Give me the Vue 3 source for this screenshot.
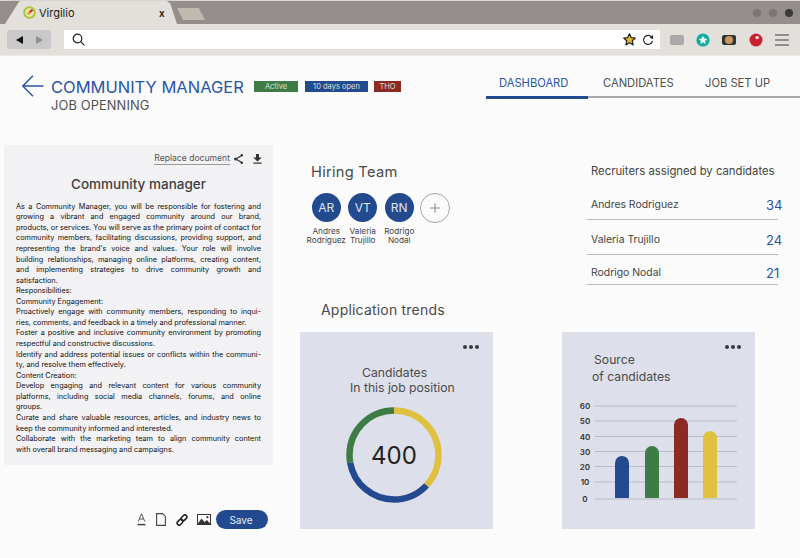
<script setup>
const docLines = [
  ['As a Community Manager, you will be responsible for fostering and', true],
  ['growing a vibrant and engaged community around our brand,', true],
  ['products, or services. You will serve as the primary point of contact for', true],
  ['community members, facilitating discussions, providing support, and', true],
  ["representing the brand's voice and values. Your role will involve", true],
  ['building relationships, managing online platforms, creating content,', true],
  ['and implementing strategies to drive community growth and', true],
  ['satisfaction.', false],
  ['Responsibilities:', false],
  ['Community Engagement:', false],
  ['Proactively engage with community members, responding to inqui-', true],
  ['ries, comments, and feedback in a timely and professional manner.', false],
  ['Foster a positive and inclusive community environment by promoting', true],
  ['respectful and constructive discussions.', false],
  ['Identify and address potential issues or conflicts within the communi-', true],
  ['ty, and resolve them effectively.', false],
  ['Content Creation:', false],
  ['Develop engaging and relevant content for various community', true],
  ['platforms, including social media channels, forums, and online', true],
  ['groups.', false],
  ['Curate and share valuable resources, articles, and industry news to', true],
  ['keep the community informed and interested.', false],
  ['Collaborate with the marketing team to align community content', true],
  ['with overall brand messaging and campaigns.', false]
]
const team = [
  { initials: 'AR', first: 'Andres', last: 'Rodriguez' },
  { initials: 'VT', first: 'Valeria', last: 'Trujillo' },
  { initials: 'RN', first: 'Rodrigo', last: 'Nodal' }
]
const recruiters = [
  { name: 'Andres Rodriguez', count: 34 },
  { name: 'Valeria Trujillo', count: 24 },
  { name: 'Rodrigo Nodal', count: 21 }
]
const ticks = [
  { label: '60', y: 14 }, { label: '50', y: 29 }, { label: '40', y: 44.5 },
  { label: '30', y: 59.5 }, { label: '20', y: 74.5 }, { label: '10', y: 90 }, { label: '0', y: 107 }
]
const bars = [
  { x: 53, top: 64, color: '#234a8f' },
  { x: 83, top: 54, color: '#3d7d45' },
  { x: 112, top: 26, color: '#8c2a23' },
  { x: 141, top: 39, color: '#e0c040' }
]
function barPath(b) {
  const r = 7, bottom = 106
  return `M${b.x} ${bottom}V${b.top + r}a${r} ${r} 0 0 1 ${2 * r} 0V${bottom}Z`
}
</script>

<template>
  <div class="page">
    <div class="tabstrip">
      <div class="tab">
        <svg class="favicon" width="13" height="13" viewBox="0 0 13 13">
          <circle cx="6.5" cy="6.5" r="5.3" fill="#f3e3b0" stroke="#a5c93a" stroke-width="2" />
          <path d="M6.5 6.5 9.5 3.8" stroke="#c8322a" stroke-width="2.2" />
          <circle cx="5.8" cy="7.2" r="1.5" fill="#e0a030" />
        </svg>
        <span class="tab-title">Virgilio</span>
        <span class="tab-close">x</span>
      </div>
      <div class="newtab"></div>
      <div class="winbtns">
        <i class="dot"></i><i class="dot"></i><i class="dot dark"></i>
      </div>
    </div>

    <div class="toolbar">
      <div class="navbtns">
        <svg width="7" height="8" viewBox="0 0 7 8"><path d="M7 0V8L0 4Z" fill="#111" /></svg>
        <svg width="7" height="8" viewBox="0 0 7 8"><path d="M0 0V8L7 4Z" fill="#8f8f8f" /></svg>
      </div>
      <div class="urlbar">
        <svg width="13" height="13" viewBox="0 0 13 13" fill="none" stroke="#222" stroke-width="1.2">
          <circle cx="5.5" cy="5.5" r="4.3" /><path d="M8.7 8.7 12.4 12.4" />
        </svg>
        <span class="url-spacer"></span>
        <svg width="13" height="13" viewBox="0 0 24 24"><path d="M12 1.5l3.2 7 7.6.8-5.7 5.1 1.6 7.5L12 18l-6.7 3.9 1.6-7.5L1.2 9.3l7.6-.8z" fill="#e3bb2d" stroke="#222" stroke-width="2.2" stroke-linejoin="round" /></svg>
        <svg width="12" height="12" viewBox="0 0 12 12" fill="none"><path d="M9.6 3A4.5 4.5 0 1 0 10.5 7" stroke="#222" stroke-width="1.1" /><path d="M7.6 3.6 11 1v4.2Z" fill="#222" /></svg>
      </div>
      <div class="exts">
        <span class="ext-grey"></span>
        <svg width="14" height="14" viewBox="0 0 14 14"><circle cx="7" cy="7" r="6.6" fill="#12ad9d" /><path d="M7 2.8l1.3 2.8 3 .3-2.3 2 .7 3L7 9.3l-2.7 1.6.7-3-2.3-2 3-.3z" fill="#fff" /></svg>
        <span class="ext-cam"><i></i></span>
        <svg width="14" height="14" viewBox="0 0 14 14"><circle cx="7" cy="7" r="6.5" fill="#c91f2e" /><circle cx="8.2" cy="4.6" r="1.7" fill="#fff" /></svg>
        <span class="burger"><i></i><i></i><i></i></span>
      </div>
    </div>

    <header class="head">
      <div class="head-left">
        <svg class="back" width="22" height="22" viewBox="0 0 22 22" fill="none" stroke="#2a55a5" stroke-width="1.4">
          <path d="M0.8 11H21.5M11 0.8 0.8 11 11 21.2" />
        </svg>
        <div>
          <div class="title-row">
            <h1 class="title">COMMUNITY MANAGER</h1>
            <span class="badge green">Active</span>
            <span class="badge blue">10 days open</span>
            <span class="badge red">THO</span>
          </div>
          <div class="subtitle">JOB OPENNING</div>
        </div>
      </div>
      <nav class="tabs">
        <a class="navtab active">DASHBOARD</a>
        <a class="navtab cand">CANDIDATES</a>
        <a class="navtab setup">JOB SET UP</a>
      </nav>
    </header>

    <main class="content">
      <section class="doc-col">
        <div class="doc">
          <div class="doc-actions">
            <span class="replace">Replace document</span>
            <svg width="9" height="10" viewBox="0 0 9 10" fill="#333"><path d="M8 .6 1.6 4.4 1.6 5.6 8 9.4 8.6 8.5 3 5 8.6 1.5Z" /><circle cx="1.6" cy="5" r="1.5" /><circle cx="7.8" cy="1.2" r="1.2" /><circle cx="7.8" cy="8.8" r="1.2" /></svg>
            <svg class="dl" width="9" height="10" viewBox="0 0 9 10" fill="#333"><path d="M3 0H6V3.4H8.8L4.5 7.4.2 3.4H3ZM.4 8.6H8.6V9.8H.4Z" /></svg>
          </div>
          <h2 class="doc-title">Community manager</h2>
          <div class="doc-body">
            <div v-for="(l, i) in docLines" :key="i" class="doc-line" :class="{ just: l[1] }">{{ l[0] }}</div>
          </div>
        </div>
        <div class="doc-tools">
          <svg width="9" height="13" viewBox="0 0 9 13" fill="none" stroke="#444"><path d="M1.2 8.5 4.5 .8 7.8 8.5M2.4 6H6.6" stroke-width=".9" /><path d="M.5 11.6H8.5" stroke-width="1.5" /></svg>
          <svg width="10" height="13" viewBox="0 0 10 13" fill="none" stroke="#444" stroke-width="1.1"><path d="M.6.6H6.6L9.4 3.4V12.4H.6Z" /></svg>
          <svg width="12" height="12" viewBox="0 0 12 12" fill="none" stroke="#222" stroke-width="1.6"><rect x="6" y="0.6" width="4" height="6.4" rx="2" transform="rotate(45 8 3.8)" /><rect x="2" y="5" width="4" height="6.4" rx="2" transform="rotate(45 4 8.2)" /></svg>
          <svg class="img-icon" width="14" height="11" viewBox="0 0 14 11"><rect x=".5" y=".5" width="13" height="10" fill="#fff" stroke="#333" /><path d="M.5 10 4.5 4.5 7.5 8 10 6 13.5 10v.5H.5Z" fill="#333" /><circle cx="10.5" cy="3.2" r="1.1" fill="#333" /></svg>
          <button class="save">Save</button>
        </div>
      </section>

      <section class="dash">
        <div class="dash-top">
          <div class="hiring">
            <h3 class="h-title">Hiring Team</h3>
            <div class="avatars">
              <div v-for="m in team" :key="m.initials" class="member">
                <div class="avatar">{{ m.initials }}</div>
                <div class="member-name">{{ m.first }}<br />{{ m.last }}</div>
              </div>
              <div class="add">
                <svg width="12" height="12" viewBox="0 0 12 12" stroke="#8a8a8a" stroke-width="1"><path d="M6 1V11M1 6H11" /></svg>
              </div>
            </div>
          </div>
          <div class="recruiters">
            <h3 class="r-title">Recruiters assigned by candidates</h3>
            <div v-for="r in recruiters" :key="r.name" class="r-row">
              <span>{{ r.name }}</span><b class="r-count">{{ r.count }}</b>
            </div>
          </div>
        </div>

        <h3 class="trends">Application trends</h3>

        <div class="cards">
          <article class="card">
            <div class="dots"><i></i><i></i><i></i></div>
            <div class="c-line c1">Candidates</div>
            <div class="c-line c2">In this job position</div>
            <div class="donut">
              <svg width="96" height="96" viewBox="0 0 96 96" fill="none" stroke-width="6.5">
                <g transform="rotate(-90 48 48)">
                  <circle cx="48" cy="48" r="44.5" pathLength="360" stroke="#e0c040" stroke-dasharray="133 227" />
                  <circle cx="48" cy="48" r="44.5" pathLength="360" stroke="#234a8f" stroke-dasharray="127 233" stroke-dashoffset="-133" />
                  <circle cx="48" cy="48" r="44.5" pathLength="360" stroke="#3d7d45" stroke-dasharray="100 260" stroke-dashoffset="-260" />
                </g>
              </svg>
              <span class="donut-val">400</span>
            </div>
          </article>

          <article class="card">
            <div class="dots"><i></i><i></i><i></i></div>
            <div class="c-line s1">Source</div>
            <div class="c-line s2">of candidates</div>
            <svg class="chart" width="193" height="120" viewBox="0 0 193 120">
              <g v-for="t in ticks" :key="t.label">
                <line x1="33" x2="175" :y1="t.y" :y2="t.y" stroke="#b9bcc6" stroke-width="1" />
                <text x="23" :y="t.y + 3" text-anchor="middle" class="tick">{{ t.label }}</text>
              </g>
              <path v-for="b in bars" :key="b.x" :d="barPath(b)" :fill="b.color" />
            </svg>
          </article>
        </div>
      </section>
    </main>
  </div>
</template>

<style scoped>
.page { width: 800px; height: 558px; overflow: hidden; background: #fbfbfb; font-family: Inter, "Open Sans", sans-serif; color: #4a4a4a; }
h1, h2, h3 { margin: 0; font-weight: 400; }

.tabstrip { height: 23px; border-top: 1px solid #d6d3d0; background: #948d8c; display: flex; align-items: flex-end; }
.tab { width: 172px; height: 23px; margin-left: 5px; background: #e3dfdb; clip-path: polygon(0 100%, 8% 4%, 9% 0, 94% 0, 96% 10%, 100% 100%); display: flex; align-items: center; padding-left: 18px; box-sizing: border-box; }
.favicon { flex: none; }
.tab-title { margin-left: 3px; font-size: 11px; color: #222; width: 120px; }
.tab-close { font-size: 10px; color: #222; font-weight: 600; }
.newtab { width: 28px; height: 12px; margin: 0 0 4px 0; background: #bfbab0; clip-path: polygon(0 0, 78% 0, 100% 100%, 22% 100%); }
.winbtns { margin-left: auto; align-self: center; display: flex; gap: 8px; padding-right: 7px; }
.dot { width: 8px; height: 8px; border-radius: 50%; background: #7b7772; }
.dot.dark { background: #3a3a3a; }

.toolbar { height: 32px; background: #e3dfdb; display: flex; align-items: center; padding-left: 7px; box-sizing: border-box; border-bottom: 1px solid #ece9e6; }
.navbtns { width: 44px; height: 19px; background: #c9c9c9; border-radius: 3px; display: flex; align-items: center; justify-content: center; gap: 13px; }
.urlbar { width: 596px; height: 19px; margin-left: 13px; background: #fff; display: flex; align-items: center; padding: 0 6px 0 8px; box-sizing: border-box; gap: 6px; }
.url-spacer { flex: 1; }
.exts { display: flex; align-items: center; margin-left: 10px; }
.ext-grey { width: 14px; height: 10px; background: #a9a9ab; border-radius: 2px; }
.exts > svg:nth-child(2) { margin-left: 12px; }
.ext-cam { width: 14px; height: 10px; margin-left: 12px; background: #333; border-radius: 2px; display: flex; align-items: center; justify-content: center; }
.ext-cam i { width: 8px; height: 8px; background: #c79a64; border-radius: 50%; }
.exts > svg:nth-child(4) { margin-left: 13px; }
.burger { width: 14px; margin-left: 12px; display: flex; flex-direction: column; gap: 3px; }
.burger i { height: 2px; background: #8f8f8f; }

.head { height: 89px; display: flex; justify-content: space-between; box-sizing: border-box; }
.head-left { display: flex; padding: 19px 0 0 22px; }
.back { flex: none; margin-right: 7px; }
.title-row { display: flex; align-items: center; height: 22px; margin-top: 1px; }
.title { font-size: 16.5px; line-height: 22px; color: #2a55a5; width: 203px; white-space: nowrap; }
.badge { height: 11px; line-height: 11px; color: #d9e0d6; font-size: 7.5px; text-align: center; display: block; margin-bottom: 2px; }
.green { background: #3d7d45; width: 44px; }
.blue { background: #234a8f; width: 63px; margin-left: 7px; }
.red { background: #8c2a23; width: 27px; margin-left: 6px; }
.subtitle { font-size: 12.9px; line-height: 16px; letter-spacing: .1px; color: #505050; }
.tabs { width: 314px; height: 42px; display: flex; box-sizing: border-box; border-bottom: 2px solid #a9a9a9; }
.navtab { height: 42px; line-height: 55px; box-sizing: border-box; font-size: 11.2px; color: #4f4f4f; white-space: nowrap; }
.navtab.active { width: 102px; padding-left: 13px; height: 43px; color: #2a55a5; border-bottom: 3px solid #234a8f; }
.cand { margin-left: 15px; width: 102px; }

.content { display: flex; }
.doc-col { width: 269px; margin-left: 4px; flex: none; }
.doc { height: 320px; background: #f2f2f4; padding-left: 12px; box-sizing: border-box; }
.doc-actions { height: 27px; display: flex; align-items: center; justify-content: flex-end; padding-right: 11px; gap: 4px; }
.replace { font-size: 8.6px; color: #555; line-height: 11px; border-bottom: 1px solid #999; }
.dl { margin-left: 6px; }
.doc-title { width: 245px; text-align: center; font-size: 13.5px; line-height: 18px; margin-top: 3px; font-weight: 500; color: #3f3f3f; }
.doc-body { width: 245px; margin-top: 8.7px; font-size: 7.3px; line-height: 10.56px; color: #111; font-weight: 400; }
.doc-line { white-space: nowrap; }
.doc-line.just { text-align: justify; text-align-last: justify; white-space: normal; }
.doc-tools { margin-top: 45px; height: 19px; display: flex; align-items: center; justify-content: flex-end; gap: 10px; width: 264px; }
.img-icon { margin-left: -1px; }
.save { width: 52px; height: 19px; margin-left: -5px; border: 0; border-radius: 10px; background: #234a8f; color: #e8ecf4; font-size: 10px; font-family: inherit; padding: 0 2px 0 0; }

.dash { margin-left: 27px; width: 478px; }
.dash-top { height: 140px; display: flex; }
.hiring { width: 287px; padding-left: 11px; box-sizing: border-box; }
.h-title { margin-top: 17px; font-size: 14.7px; line-height: 20px; letter-spacing: .25px; }
.avatars { margin-top: 11px; display: flex; align-items: flex-start; margin-left: -3px; }
.member { width: 36.5px; display: flex; flex-direction: column; align-items: center; }
.avatar { width: 29px; height: 29px; border-radius: 50%; background: #234a8f; color: #dfe5f1; font-size: 12px; line-height: 29px; text-align: center; }
.member-name { margin-top: 5px; font-size: 8.2px; line-height: 8.6px; text-align: center; color: #444; white-space: nowrap; }
.add { width: 28px; height: 28px; margin-left: 2px; border: 1px solid #a3a3a3; border-radius: 50%; display: flex; align-items: center; justify-content: center; }
.recruiters { width: 191px; }
.r-title { margin: 18px 0 0 4px; font-size: 11.3px; line-height: 16px; white-space: nowrap; color: #444; }
.r-row { display: flex; justify-content: space-between; font-size: 10.4px; line-height: 16px; border-bottom: 1px solid #b8b8b8; padding: 10px 0 3px 4px; color: #444; }
.r-row:nth-of-type(1) { padding: 18px 0 6px 4px; }
.r-row:nth-of-type(2) { padding: 12px 0 6px 4px; }
.r-count { font-weight: 400; font-size: 13px; color: #2a55a5; margin-right: -7px; width: 19px; }
.trends { margin: 15px 0 12px 21px; font-size: 14px; line-height: 20px; letter-spacing: .2px; }
.cards { display: flex; gap: 69px; }
.card { width: 193px; height: 197px; background: #dde0ea; box-sizing: border-box; padding-top: 13px; }
.dots { display: flex; justify-content: flex-end; gap: 2px; height: 4px; padding-right: 14px; }
.dots i { width: 4px; height: 4px; border-radius: 50%; background: #3a3a3a; }
.c-line { font-size: 12.2px; line-height: 15px; white-space: nowrap; color: #4a4a4a; }
.c1 { margin: 16px 0 0 62px; }
.c2 { margin: 0 0 0 50px; }
.donut { position: relative; width: 96px; height: 96px; margin: 12px 0 0 46px; }
.donut-val { position: absolute; inset: 0; display: flex; align-items: center; justify-content: center; font-size: 24px; color: #222; }
.s1 { margin: 2px 0 0 32px; line-height: 17px; }
.s2 { margin: 0 0 0 30px; line-height: 17px; }
.chart { display: block; margin-top: 7px; }
.tick { font-size: 8px; font-weight: 600; fill: #333; font-family: Inter, sans-serif; }
</style>

<style>
html, body { margin: 0; padding: 0; }
</style>
